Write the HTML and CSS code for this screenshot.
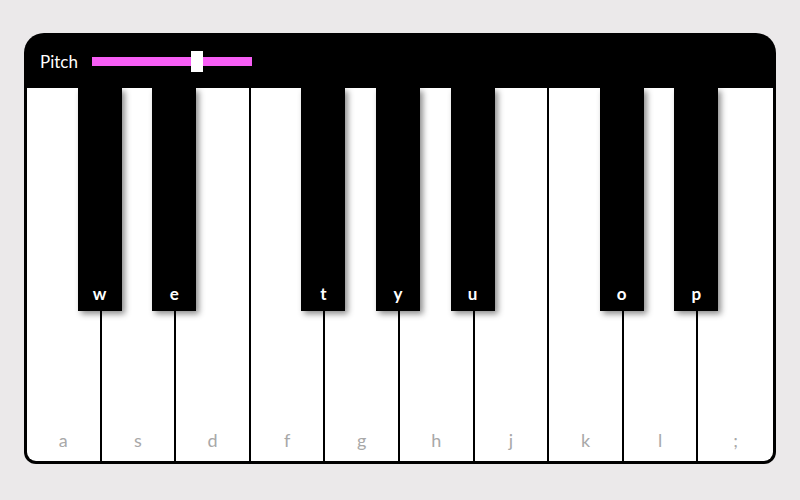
FILE: index.html
```html
<!DOCTYPE html>
<html>
<head>
<meta charset="utf-8">
<link rel="stylesheet" href="styles.css">
</head>
<body>
<div class="piano">
  <div class="header">
    <span class="label">Pitch</span>
    <div class="track"><div class="thumb"></div></div>
  </div>
  <div class="keys">
    <div class="white"><span class="wl">a</span><div class="black"><span>w</span></div></div>
    <div class="white"><span class="wl">s</span><div class="black"><span>e</span></div></div>
    <div class="white"><span class="wl">d</span></div>
    <div class="white"><span class="wl">f</span><div class="black"><span>t</span></div></div>
    <div class="white"><span class="wl">g</span><div class="black"><span>y</span></div></div>
    <div class="white"><span class="wl">h</span><div class="black"><span>u</span></div></div>
    <div class="white"><span class="wl">j</span></div>
    <div class="white"><span class="wl">k</span><div class="black"><span>o</span></div></div>
    <div class="white"><span class="wl">l</span><div class="black"><span>p</span></div></div>
    <div class="white"><span class="wl">;</span></div>
  </div>
</div>
</body>
</html>
```
FILE: styles.css
```css
html, body {
  margin: 0;
  padding: 0;
  background: #ebe9ea;
  font-family: Lato, "Open Sans", sans-serif;
}
body {
  width: 800px;
  height: 500px;
  overflow: hidden;
}
.piano {
  margin: 33px 0 0 24px;
  width: 752px;
  height: 431px;
  box-sizing: border-box;
  background: #000;
  border-radius: 20px 20px 12px 12px;
  padding: 0 3px 3px 3px;
  display: flex;
  flex-direction: column;
}
.header {
  height: 55px;
  flex: none;
  display: flex;
  align-items: center;
  padding-left: 13px;
}
.label {
  color: #fff;
  font-size: 17px;
  width: 52px;
  margin-top: 1px;
}
.track {
  position: relative;
  width: 160px;
  height: 9px;
  background: #f75ef5;
  margin-top: 1px;
}
.thumb {
  position: absolute;
  left: 99px;
  top: -6px;
  width: 12px;
  height: 21px;
  background: #fff;
}
.keys {
  flex: 1;
  display: flex;
  border-radius: 0 0 9px 9px;
  overflow: hidden;
}
.white {
  position: relative;
  flex: none;
  width: 10%;
  box-sizing: border-box;
  background: #fff;
  border-right: 2px solid #000;
  display: flex;
  align-items: flex-end;
  justify-content: center;
}
.white:last-child {
  border-right: none;
}
.wl {
  color: #a8a8a8;
  font-size: 18px;
  padding-bottom: 10px;
}
.black {
  position: absolute;
  z-index: 2;
  top: 0;
  right: -22px;
  width: 44px;
  height: 223px;
  background: #000;
  box-shadow: 3px 3px 6px rgba(0, 0, 0, 0.45);
  display: flex;
  align-items: flex-end;
  justify-content: center;
}
.black span {
  color: #fff;
  font-weight: bold;
  font-size: 17px;
  padding-bottom: 7px;
}
```
